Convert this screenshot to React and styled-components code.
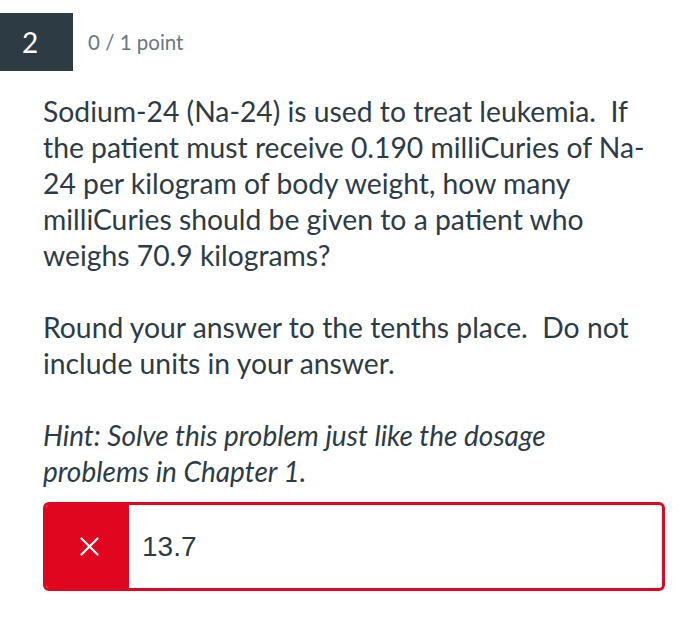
import React from 'react';
import styled, { createGlobalStyle } from 'styled-components';

const Global = createGlobalStyle`
  html, body {
    margin: 0;
    padding: 0;
    background: #fff;
    font-family: Lato, "Open Sans", sans-serif;
  }
`;

const Page = styled.div`
  width: 700px;
  height: 635px;
  box-sizing: border-box;
  padding-top: 13px;
`;

const Header = styled.div`
  display: flex;
  align-items: center;
  height: 58px;
`;

const Badge = styled.div`
  width: 73px;
  height: 58px;
  box-sizing: border-box;
  padding-left: 22px;
  background: #2d3b45;
  color: #fff;
  font-size: 28px;
  display: flex;
  align-items: center;
`;

const Points = styled.div`
  margin-left: 15px;
  font-size: 20.5px;
  color: #6b7780;
`;

const Body = styled.div`
  padding: 22px 46px 0 43px;
`;

const Para = styled.p`
  margin: 0 0 36px;
  font-size: ${(p) => (p.italic ? '28px' : '28.3px')};
  line-height: 36px;
  color: #2d3b45;
  font-style: ${(p) => (p.italic ? 'italic' : 'normal')};

  &:last-of-type {
    margin-bottom: 0;
  }
`;

const AnswerBox = styled.div`
  display: flex;
  width: 622px;
  height: 89px;
  box-sizing: border-box;
  border: 3px solid #e0061f;
  border-radius: 6px;
  overflow: hidden;
  margin-top: 13px;
`;

const WrongMark = styled.div`
  width: 83px;
  padding-left: 4px;
  box-sizing: border-box;
  background: #e0061f;
  display: flex;
  align-items: center;
  justify-content: center;
`;

const AnswerValue = styled.div`
  display: flex;
  align-items: center;
  padding-left: 13px;
  font-family: "Liberation Sans", Arial, sans-serif;
  font-size: 28px;
  color: #2d3b45;
`;

export default function App() {
  return (
    <Page>
      <Global />
      <Header>
        <Badge>2</Badge>
        <Points>0 / 1 point</Points>
      </Header>
      <Body>
        <Para>
          Sodium-24 (Na-24) is used to treat leukemia.&nbsp; If the patient must receive 0.190 milliCuries of Na-24 per kilogram of body weight, how many milliCuries should be given to a patient who weighs 70.9 kilograms?
        </Para>
        <Para>
          Round your answer to the tenths place.&nbsp; Do not include units in your answer.
        </Para>
        <Para italic>
          Hint: Solve this problem just like the dosage problems in Chapter 1.
        </Para>
        <AnswerBox>
          <WrongMark>
            <svg width="19" height="19" viewBox="0 0 19 19">
              <path d="M1.5 1.5 L17.5 17.5 M17.5 1.5 L1.5 17.5" stroke="#fff" strokeWidth="2.2" strokeLinecap="round" />
            </svg>
          </WrongMark>
          <AnswerValue>13.7</AnswerValue>
        </AnswerBox>
      </Body>
    </Page>
  );
}
